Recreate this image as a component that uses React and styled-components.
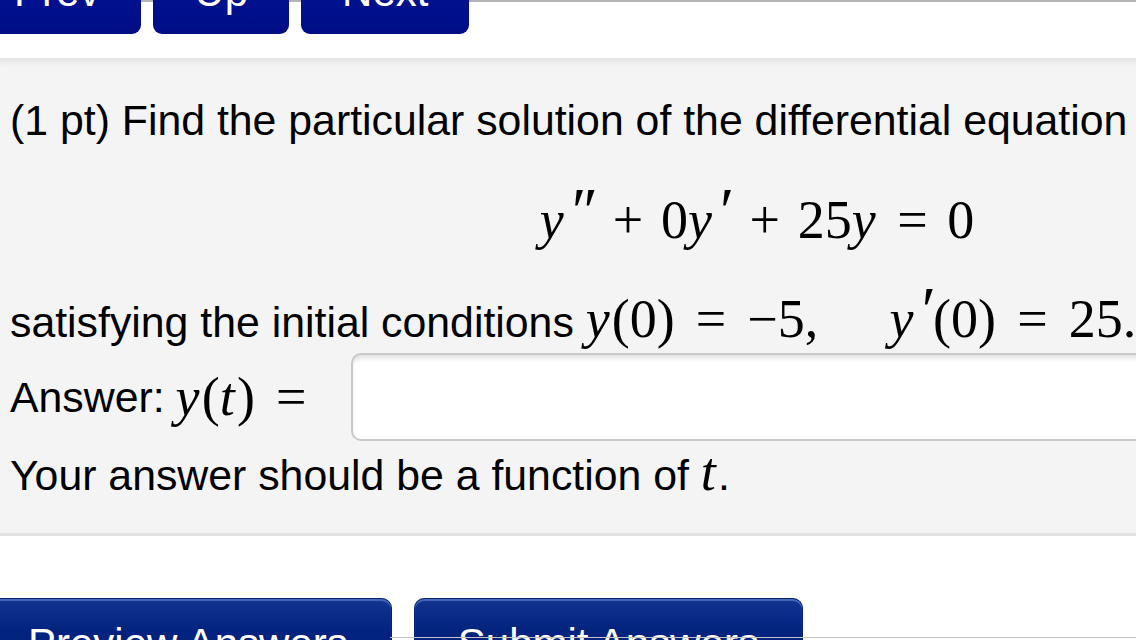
import styled, { createGlobalStyle } from 'styled-components'

const GlobalStyle = createGlobalStyle`
  html, body {
    margin: 0;
    padding: 0;
    background: #fff;
    overflow: hidden;
  }
  body {
    font-family: 'Liberation Sans', Arial, Helvetica, sans-serif;
    color: #000;
  }
`

const Page = styled.div`
  width: 1514px;
  height: 640px;
  overflow: hidden;
`

const Header = styled.div`
  height: 58px;
  border-top: 2px solid #b3b3b3;
  box-sizing: border-box;
`

const Nav = styled.nav`
  display: flex;
  gap: 12px;
  margin-top: -38px;
  margin-left: -27px;
`

const NavButton = styled.div`
  height: 70px;
  padding: 7px 41px 0;
  box-sizing: border-box;
  border-radius: 9px;
  background: linear-gradient(#00159a, #000d85);
  color: #fff;
  font-size: 42px;
  line-height: 42px;
  text-align: center;
`

const Problem = styled.section`
  background: #f4f4f4;
  border-top: 1px solid #e4e4e4;
  border-bottom: 3px solid #e2e2e2;
  box-shadow: inset 0 7px 6px -4px rgba(0, 0, 0, 0.07);
  padding: 33px 10px 0;
  height: 478px;
  box-sizing: border-box;
  width: 1514px;
`

const Text = styled.p`
  margin: ${(p) => p.$mt || 0}px 0 0;
  font-size: 42.8px;
  line-height: 56px;
  white-space: nowrap;
`

const Display = styled.div`
  margin-top: 40px;
  text-align: center;
  font-family: 'Liberation Serif', 'Times New Roman', serif;
  font-size: 54px;
  line-height: 64px;
  white-space: nowrap;
`

const MathSpan = styled.span`
  font-family: 'Liberation Serif', 'Times New Roman', serif;
  font-size: 54px;
  white-space: nowrap;
`

const Mi = styled.span`
  font-style: italic;
  font-family: 'Liberation Serif', 'Times New Roman', serif;
  font-size: ${(p) => p.$size || 'inherit'};
  margin-right: 0.04em;
`

const Mn = styled.span`
  font-family: 'Liberation Serif', 'Times New Roman', serif;
`

const Mo = styled.span`
  font-family: 'Liberation Serif', 'Times New Roman', serif;
  margin: 0 ${(p) => p.$space}em;
`

const Prime = styled.span`
  font-family: 'Liberation Serif', 'DejaVu Serif', serif;
  font-style: italic;
  font-size: 1.2em;
  line-height: 0;
  vertical-align: 0.08em;
  letter-spacing: -0.04em;
  margin-left: 0.03em;
  margin-right: 0.06em;
`

const AnswerRow = styled.div`
  display: flex;
  align-items: center;
  margin-top: 3px;
  height: 88px;
`

const Label = styled.span`
  font-size: 42.8px;
  margin-right: 11px;
`

const AnswerInput = styled.div`
  flex: 1;
  height: 88px;
  margin-left: 24px;
  background: #fff;
  border: 2px solid #c8c8c8;
  border-radius: 10px;
  box-shadow: inset 0 5px 5px -2px rgba(0, 0, 0, 0.13);
  box-sizing: border-box;
`

const Footer = styled.div`
  display: flex;
  gap: 22px;
  margin-top: 62px;
  margin-left: -16px;
  position: relative;
`

const SubmitButton = styled.div`
  height: 80px;
  padding: 24px 43px 0;
  box-sizing: border-box;
  border-radius: 10px;
  border: 1px solid #0a1f6e;
  background: linear-gradient(#12348f, #03237f 40%, #022080);
  box-shadow: inset 0 2px 1px rgba(120, 150, 220, 0.55);
  color: #fff;
  font-size: 42px;
  line-height: 42px;
  white-space: nowrap;
`

const EdgeLine = styled.div`
  position: absolute;
  left: 406px;
  right: 0;
  top: 39px;
  height: 1px;
  background: #c4c4c4;
`

const Y = () => <Mi>y</Mi>

export default function App() {
  return (
    <Page>
      <GlobalStyle />
      <Header>
        <Nav>
          <NavButton>Prev</NavButton>
          <NavButton>Up</NavButton>
          <NavButton>Next</NavButton>
        </Nav>
      </Header>
      <Problem>
        <Text>(1 pt) Find the particular solution of the differential equation</Text>
        <Display>
          <Y />
          <Prime>′′</Prime>
          <Mo $space={0.33}>+</Mo>
          <Mn>0</Mn>
          <Y />
          <Prime>′</Prime>
          <Mo $space={0.33}>+</Mo>
          <Mn>25</Mn>
          <Y />
          <Mo $space={0.36}>=</Mo>
          <Mn>0</Mn>
        </Display>
        <Text $mt={39}>
          satisfying the initial conditions{' '}
          <MathSpan>
            <Y />
            <Mn>(0)</Mn>
            <Mo $space={0.39}>=</Mo>
            <Mn>−5,</Mn>
            <Mo $space={0.66}></Mo>
            <Y />
            <Prime>′</Prime>
            <Mn>(0)</Mn>
            <Mo $space={0.39}>=</Mo>
            <Mn>25.</Mn>
          </MathSpan>
        </Text>
        <AnswerRow>
          <Label>Answer:</Label>
          <MathSpan>
            <Y />
            <Mn>(</Mn>
            <Mi>t</Mi>
            <Mn>)</Mn>
            <Mo $space={0.39}>=</Mo>
          </MathSpan>
          <AnswerInput />
        </AnswerRow>
        <Text $mt={3}>
          Your answer should be a function of <Mi $size="54px">t</Mi>.
        </Text>
      </Problem>
      <Footer>
        <SubmitButton>Preview Answers</SubmitButton>
        <SubmitButton>Submit Answers</SubmitButton>
        <EdgeLine />
      </Footer>
    </Page>
  )
}
